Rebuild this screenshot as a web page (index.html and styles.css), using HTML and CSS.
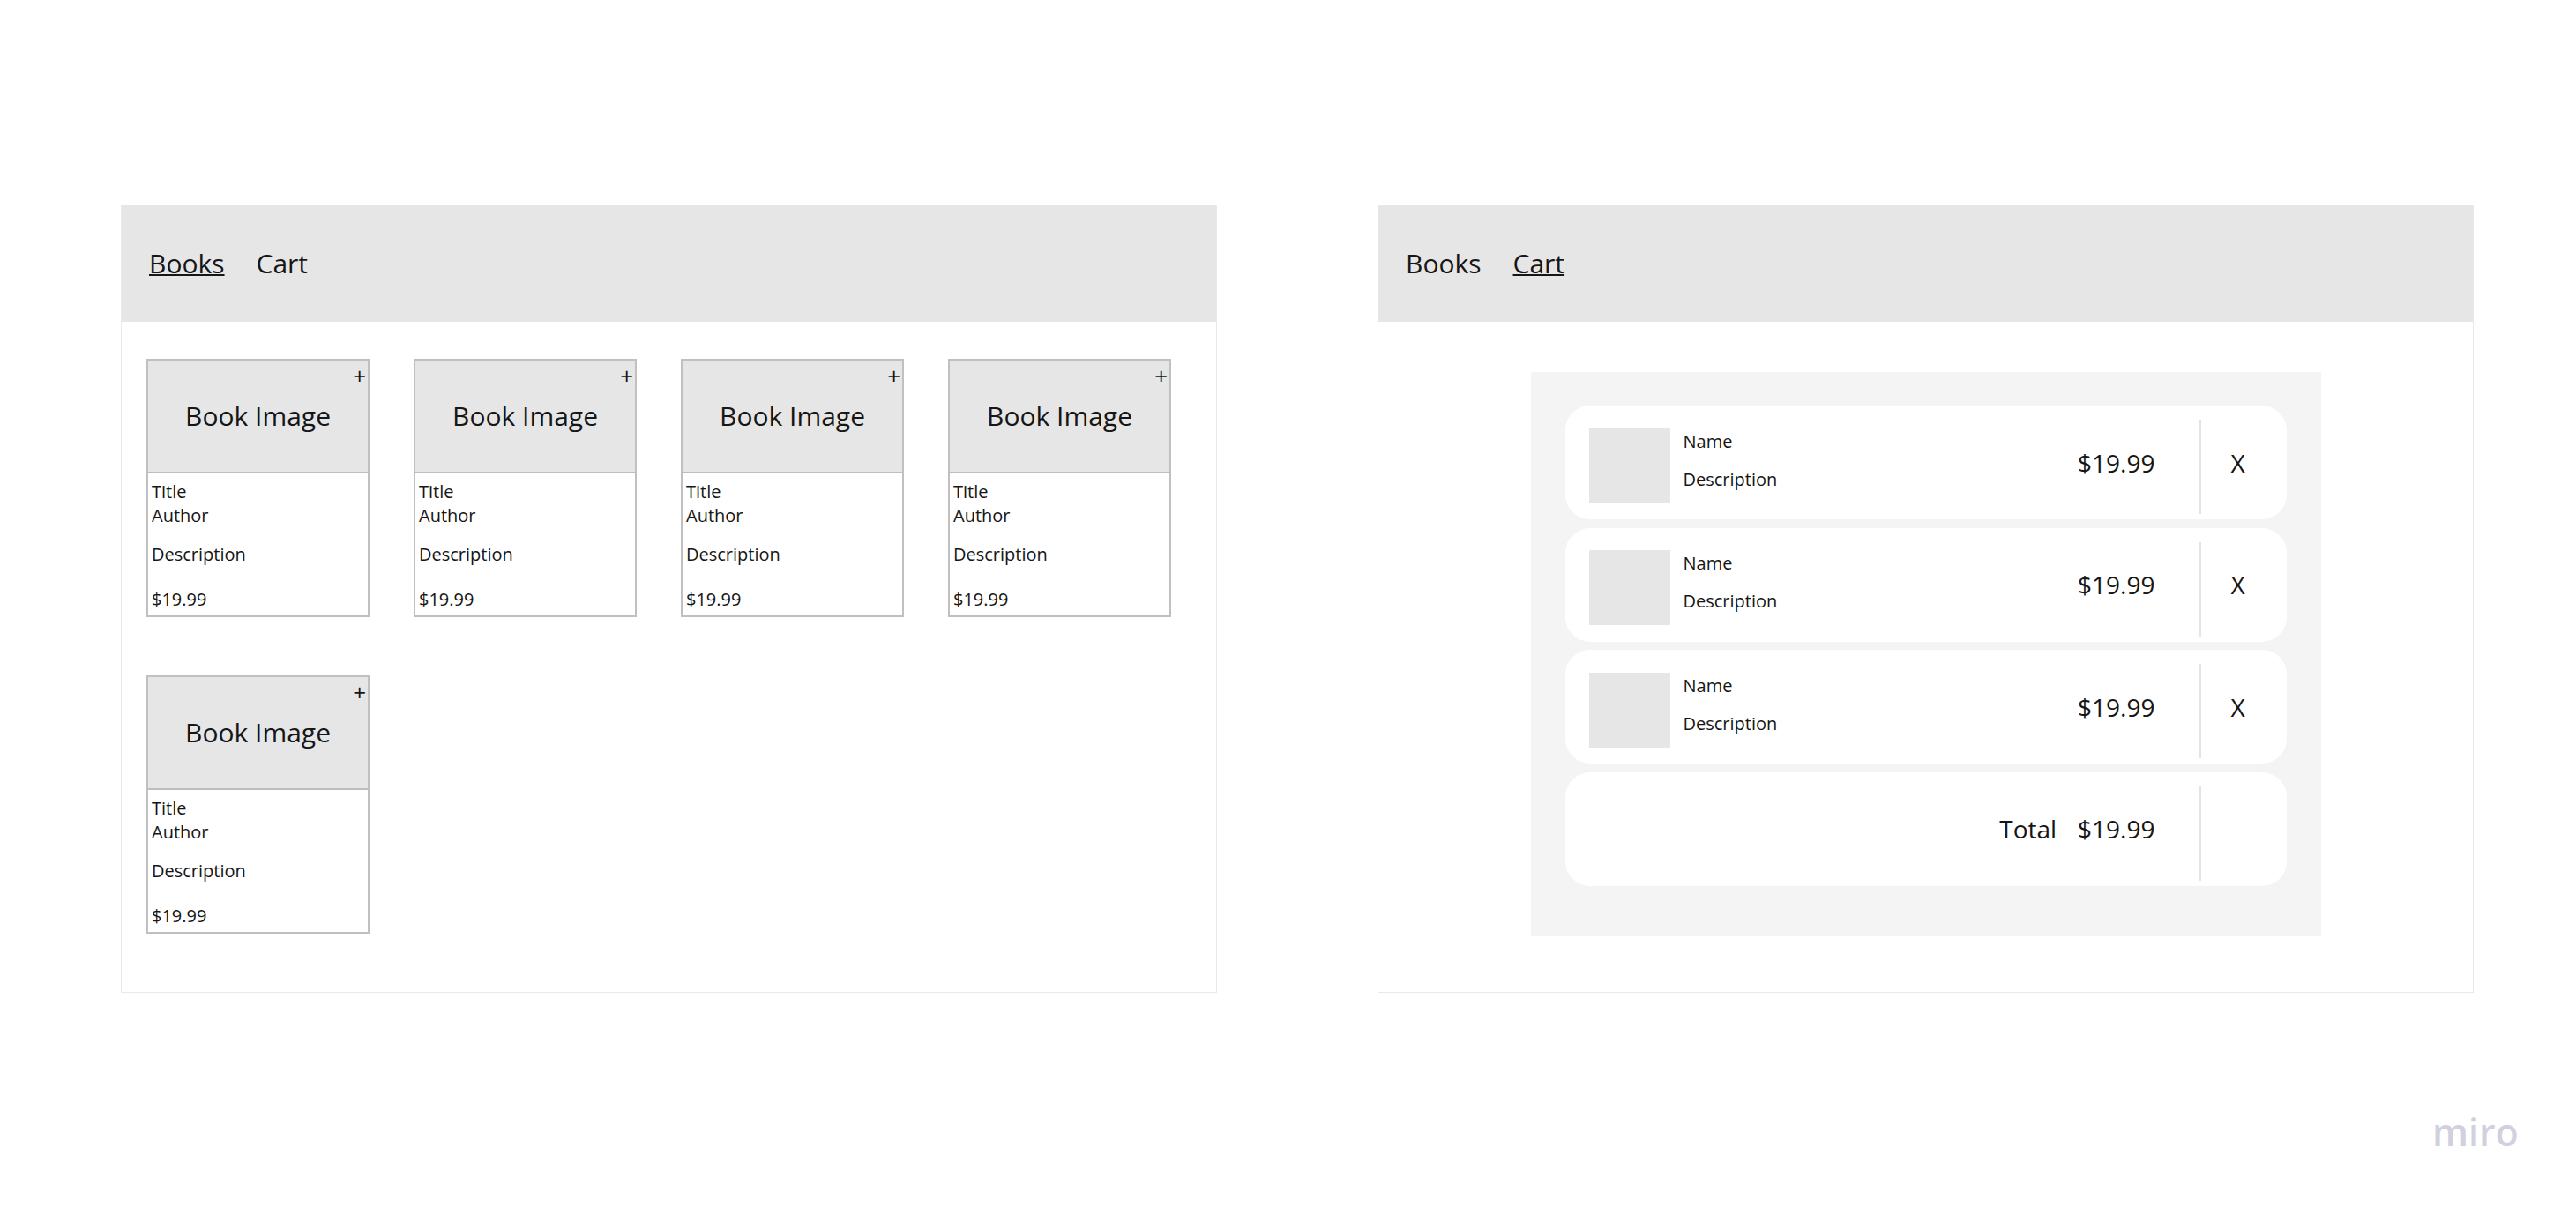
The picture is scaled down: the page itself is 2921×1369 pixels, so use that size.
FILE: index.html
```html
<!DOCTYPE html>
<html lang="en">
<head>
<meta charset="utf-8">
<title>Bookstore wireframes</title>
<link rel="stylesheet" href="styles.css">
</head>
<body>
<div class="board">
  <section class="frame">
    <nav class="nav">
      <span class="active">Books</span>
      <span>Cart</span>
    </nav>
    <div class="shelf">
      <div class="card">
        <div class="cover">Book Image<span class="add">+</span></div>
        <div class="details">
          <div>Title</div>
          <div>Author</div>
          <div class="desc">Description</div>
          <div class="cost">$19.99</div>
        </div>
      </div>
      <div class="card">
        <div class="cover">Book Image<span class="add">+</span></div>
        <div class="details">
          <div>Title</div>
          <div>Author</div>
          <div class="desc">Description</div>
          <div class="cost">$19.99</div>
        </div>
      </div>
      <div class="card">
        <div class="cover">Book Image<span class="add">+</span></div>
        <div class="details">
          <div>Title</div>
          <div>Author</div>
          <div class="desc">Description</div>
          <div class="cost">$19.99</div>
        </div>
      </div>
      <div class="card">
        <div class="cover">Book Image<span class="add">+</span></div>
        <div class="details">
          <div>Title</div>
          <div>Author</div>
          <div class="desc">Description</div>
          <div class="cost">$19.99</div>
        </div>
      </div>
      <div class="card">
        <div class="cover">Book Image<span class="add">+</span></div>
        <div class="details">
          <div>Title</div>
          <div>Author</div>
          <div class="desc">Description</div>
          <div class="cost">$19.99</div>
        </div>
      </div>
    </div>
  </section>

  <section class="frame">
    <nav class="nav">
      <span>Books</span>
      <span class="active">Cart</span>
    </nav>
    <div class="cart-area">
      <div class="cart">
        <div class="line">
          <div class="thumb"></div>
          <div class="info"><span>Name</span><span>Description</span></div>
          <div class="amount">$19.99</div>
          <div class="divider"></div>
          <div class="remove">X</div>
        </div>
        <div class="line">
          <div class="thumb"></div>
          <div class="info"><span>Name</span><span>Description</span></div>
          <div class="amount">$19.99</div>
          <div class="divider"></div>
          <div class="remove">X</div>
        </div>
        <div class="line">
          <div class="thumb"></div>
          <div class="info"><span>Name</span><span>Description</span></div>
          <div class="amount">$19.99</div>
          <div class="divider"></div>
          <div class="remove">X</div>
        </div>
        <div class="line">
          <div class="spacer"></div>
          <div class="label">Total</div>
          <div class="amount">$19.99</div>
          <div class="divider"></div>
          <div class="remove"></div>
        </div>
      </div>
    </div>
  </section>
</div>
<div class="watermark">miro</div>
</body>
</html>
```

FILE: styles.css
```css
html, body {
  margin: 0;
  padding: 0;
}

body {
  width: 2921px;
  height: 1369px;
  overflow: hidden;
  position: relative;
  background: #ffffff;
  color: #161616;
  font-family: "Open Sans", "Liberation Sans", sans-serif;
}

.board {
  display: flex;
  align-items: flex-start;
  gap: 182px;
  padding: 232px 0 0 137px;
}

.frame {
  width: 1243px;
  height: 894px;
  box-sizing: border-box;
  border: 1px solid #e9e9e9;
  display: flex;
  flex-direction: column;
}

.nav {
  height: 132px;
  flex-shrink: 0;
  background: #e6e6e6;
  display: flex;
  align-items: center;
  gap: 36px;
  padding-left: 31px;
  font-size: 30px;
  line-height: 40px;
}

.nav .active {
  text-decoration: underline;
  text-decoration-thickness: 2px;
}

/* Books page */
.shelf {
  display: grid;
  grid-template-columns: repeat(4, 253px);
  column-gap: 50px;
  row-gap: 66px;
  padding: 42px 0 0 28px;
  align-content: start;
}

.card {
  height: 293px;
  box-sizing: border-box;
  border: 2px solid #c0c0c0;
  display: flex;
  flex-direction: column;
}

.cover {
  position: relative;
  height: 126px;
  flex-shrink: 0;
  background: #e6e6e6;
  border-bottom: 2px solid #bdbdbd;
  display: flex;
  align-items: center;
  justify-content: center;
  font-size: 30px;
  line-height: 40px;
}

.add {
  position: absolute;
  top: 4px;
  right: 2px;
  font-size: 26px;
  line-height: 26px;
}

.details {
  padding: 7px 4px 0 4px;
  font-size: 20px;
  line-height: 27px;
}

.desc {
  margin-top: 17px;
}

.cost {
  margin-top: 24px;
}

/* Cart page */
.cart-area {
  display: flex;
  justify-content: center;
  align-items: flex-start;
  padding-top: 57px;
}

.cart {
  width: 896px;
  box-sizing: border-box;
  background: #f4f4f4;
  padding: 38px 39px 57px;
  display: flex;
  flex-direction: column;
  gap: 9.5px;
}

.line {
  height: 129px;
  box-sizing: border-box;
  background: #ffffff;
  border-radius: 28px;
  display: flex;
  align-items: center;
  padding-left: 27px;
}

.thumb {
  width: 92px;
  height: 85px;
  flex-shrink: 0;
  margin-top: 7px;
  background: #e6e6e6;
}

.info {
  flex: 1;
  margin-left: 15px;
  margin-bottom: 6px;
  display: flex;
  flex-direction: column;
  gap: 16px;
  font-size: 20px;
  line-height: 27px;
}

.spacer {
  flex: 1;
}

.label {
  font-size: 28px;
  line-height: 38px;
  margin-right: 24px;
}

.amount {
  font-size: 28px;
  line-height: 38px;
}

.divider {
  width: 2px;
  height: 107px;
  flex-shrink: 0;
  align-self: flex-start;
  margin-top: 16px;
  margin-left: 50px;
  background: #e4e4e4;
}

.remove {
  width: 97px;
  flex-shrink: 0;
  box-sizing: border-box;
  padding-left: 34px;
  font-size: 28px;
  line-height: 38px;
}

.watermark {
  position: absolute;
  left: 2758px;
  top: 1262px;
  font-size: 43px;
  font-weight: 600;
  line-height: 1;
  color: #d0d1dd;
}
```
